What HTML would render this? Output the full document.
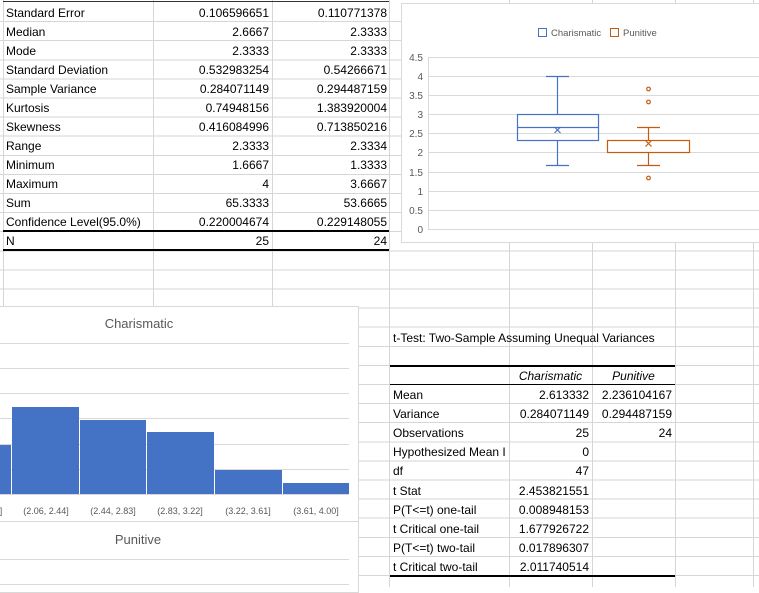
<!DOCTYPE html>
<html><head><meta charset="utf-8"><style>
html,body{margin:0;padding:0;}
body{width:759px;height:587px;position:relative;overflow:hidden;background:#fff;font-family:"Liberation Sans",Calibri,sans-serif;font-size:12px;color:#000;}
.grid{position:absolute;left:0;top:0;width:759px;height:587px;
background-image:repeating-linear-gradient(to bottom,transparent 0,transparent 18.1px,#d6d6d6 18.1px,#d6d6d6 19.1px);
background-position:0 3px;}
.v{position:absolute;top:0;width:1px;height:587px;background:#d6d6d6;}
.t{position:absolute;height:19px;line-height:19px;white-space:nowrap;}
.r{text-align:right;}
.bl{position:absolute;height:2px;background:#000;}
.chart{position:absolute;background:#fff;border:1px solid #d9d9d9;}
.sv{font-family:"Liberation Sans",sans-serif;}
</style></head><body>
<div class="grid"></div>
<div class="v" style="left:3px"></div><div class="v" style="left:153px"></div><div class="v" style="left:272px"></div><div class="v" style="left:389px"></div>
<div class="v" style="left:509px"></div><div class="v" style="left:592px"></div><div class="v" style="left:675px"></div><div class="v" style="left:753px"></div>

<div class="bl" style="left:3px;top:1px;width:386px;height:1px;background:#333"></div>
<div class="t" style="left:6px;top:4px">Standard Error</div><div class="t r" style="left:153px;width:116px;top:4px">0.106596651</div><div class="t r" style="left:272px;width:115px;top:4px">0.110771378</div>
<div class="t" style="left:6px;top:23px">Median</div><div class="t r" style="left:153px;width:116px;top:23px">2.6667</div><div class="t r" style="left:272px;width:115px;top:23px">2.3333</div>
<div class="t" style="left:6px;top:42px">Mode</div><div class="t r" style="left:153px;width:116px;top:42px">2.3333</div><div class="t r" style="left:272px;width:115px;top:42px">2.3333</div>
<div class="t" style="left:6px;top:61px">Standard Deviation</div><div class="t r" style="left:153px;width:116px;top:61px">0.532983254</div><div class="t r" style="left:272px;width:115px;top:61px">0.54266671</div>
<div class="t" style="left:6px;top:80px">Sample Variance</div><div class="t r" style="left:153px;width:116px;top:80px">0.284071149</div><div class="t r" style="left:272px;width:115px;top:80px">0.294487159</div>
<div class="t" style="left:6px;top:99px">Kurtosis</div><div class="t r" style="left:153px;width:116px;top:99px">0.74948156</div><div class="t r" style="left:272px;width:115px;top:99px">1.383920004</div>
<div class="t" style="left:6px;top:118px">Skewness</div><div class="t r" style="left:153px;width:116px;top:118px">0.416084996</div><div class="t r" style="left:272px;width:115px;top:118px">0.713850216</div>
<div class="t" style="left:6px;top:137px">Range</div><div class="t r" style="left:153px;width:116px;top:137px">2.3333</div><div class="t r" style="left:272px;width:115px;top:137px">2.3334</div>
<div class="t" style="left:6px;top:156px">Minimum</div><div class="t r" style="left:153px;width:116px;top:156px">1.6667</div><div class="t r" style="left:272px;width:115px;top:156px">1.3333</div>
<div class="t" style="left:6px;top:175px">Maximum</div><div class="t r" style="left:153px;width:116px;top:175px">4</div><div class="t r" style="left:272px;width:115px;top:175px">3.6667</div>
<div class="t" style="left:6px;top:194px">Sum</div><div class="t r" style="left:153px;width:116px;top:194px">65.3333</div><div class="t r" style="left:272px;width:115px;top:194px">53.6665</div>
<div class="t" style="left:6px;top:213px">Confidence Level(95.0%)</div><div class="t r" style="left:153px;width:116px;top:213px">0.220004674</div><div class="t r" style="left:272px;width:115px;top:213px">0.229148055</div>
<div class="t" style="left:6px;top:232px">N</div><div class="t r" style="left:153px;width:116px;top:232px">25</div><div class="t r" style="left:272px;width:115px;top:232px">24</div>
<div class="bl" style="left:3px;top:230px;width:386px"></div>
<div class="bl" style="left:3px;top:249px;width:386px"></div>

<div class="chart" style="left:401px;top:3px;width:360px;height:238px"></div>
<svg class="sv" style="position:absolute;left:0;top:0" width="759" height="250">
<g stroke="#d9d9d9" stroke-width="1">
<line x1="428" y1="57.5" x2="759" y2="57.5"/><line x1="428" y1="76.5" x2="759" y2="76.5"/><line x1="428" y1="95.5" x2="759" y2="95.5"/><line x1="428" y1="114.5" x2="759" y2="114.5"/><line x1="428" y1="133.5" x2="759" y2="133.5"/><line x1="428" y1="152.5" x2="759" y2="152.5"/><line x1="428" y1="172.5" x2="759" y2="172.5"/><line x1="428" y1="191.5" x2="759" y2="191.5"/><line x1="428" y1="210.5" x2="759" y2="210.5"/><line x1="428" y1="229.5" x2="759" y2="229.5"/>
<line x1="428.5" y1="57" x2="428.5" y2="229"/>
</g>
<g font-size="10" fill="#595959" text-anchor="end">
<text x="423" y="61">4.5</text><text x="423" y="80">4</text><text x="423" y="99">3.5</text><text x="423" y="118">3</text><text x="423" y="137">2.5</text><text x="423" y="156">2</text><text x="423" y="176">1.5</text><text x="423" y="195">1</text><text x="423" y="214">0.5</text><text x="423" y="233">0</text>
</g>
<g font-size="9.5" fill="#595959">
<rect x="538.5" y="28.5" width="8" height="8" fill="none" stroke="#4472C4"/><text x="551" y="36">Charismatic</text>
<rect x="610.5" y="28.5" width="8" height="8" fill="none" stroke="#C55A11"/><text x="623" y="36">Punitive</text>
</g>
<g stroke="#4472C4" fill="none" stroke-width="1.2">
<line x1="546" y1="76.5" x2="569" y2="76.5"/><line x1="557.5" y1="76.5" x2="557.5" y2="114.5"/>
<rect x="517.5" y="114.5" width="81" height="26"/><line x1="517.5" y1="127.5" x2="598.5" y2="127.5"/>
<line x1="557.5" y1="140.5" x2="557.5" y2="165.5"/><line x1="546" y1="165.5" x2="569" y2="165.5"/>
<path d="M554.5 127l6 6M560.5 127l-6 6"/>
</g>
<g stroke="#C55A11" fill="none" stroke-width="1.2">
<line x1="637" y1="127.5" x2="660" y2="127.5"/><line x1="648.5" y1="127.5" x2="648.5" y2="140.5"/>
<rect x="607.5" y="140.5" width="82" height="12"/>
<line x1="648.5" y1="152.5" x2="648.5" y2="165.5"/><line x1="637" y1="165.5" x2="660" y2="165.5"/>
<path d="M645.5 140.5l6 6M651.5 140.5l-6 6"/>
<circle cx="648.5" cy="89" r="1.8"/><circle cx="648.5" cy="102" r="1.8"/><circle cx="648.5" cy="178" r="1.8"/>
</g>
</svg>

<div class="chart" style="left:-2px;top:306px;width:359px;height:214px"></div>
<div class="chart" style="left:-2px;top:521px;width:359px;height:70px"></div>
<svg class="sv" style="position:absolute;left:0;top:300px" width="360" height="287">
<g stroke="#d9d9d9"><line x1="0" y1="43.5" x2="349" y2="43.5"/><line x1="0" y1="68.5" x2="349" y2="68.5"/><line x1="0" y1="93.5" x2="349" y2="93.5"/><line x1="0" y1="118.5" x2="349" y2="118.5"/><line x1="0" y1="144.5" x2="349" y2="144.5"/><line x1="0" y1="169.5" x2="349" y2="169.5"/><line x1="0" y1="194.5" x2="349" y2="194.5"/>
<line x1="0" y1="259.5" x2="349" y2="259.5"/><line x1="0" y1="284.5" x2="349" y2="284.5"/></g>
<g fill="#4472C4"><rect x="0" y="145" width="11" height="49"/><rect x="12" y="107" width="67" height="87"/><rect x="80" y="120" width="66" height="74"/><rect x="147" y="132" width="67" height="62"/><rect x="215" y="170" width="67" height="24"/><rect x="283" y="183" width="66" height="11"/></g>
<text x="139" y="28" font-size="13" fill="#595959" text-anchor="middle">Charismatic</text>
<text x="138" y="244" font-size="13" fill="#595959" text-anchor="middle">Punitive</text>
<g font-size="9" fill="#595959" text-anchor="middle"><text x="1" y="214">]</text><text x="46" y="214">(2.06, 2.44]</text><text x="113" y="214">(2.44, 2.83]</text><text x="180" y="214">(2.83, 3.22]</text><text x="248" y="214">(3.22, 3.61]</text><text x="316" y="214">(3.61, 4.00]</text></g>
</svg>

<div class="t" style="left:393px;top:329px">t-Test: Two-Sample Assuming Unequal Variances</div>
<div class="t" style="left:509px;width:83px;top:367px;text-align:center;font-style:italic">Charismatic</div>
<div class="t" style="left:592px;width:83px;top:367px;text-align:center;font-style:italic">Punitive</div>
<div class="bl" style="left:390px;top:365px;width:285px"></div>
<div class="bl" style="left:390px;top:384px;width:285px;height:1px"></div>
<div class="bl" style="left:390px;top:575px;width:285px"></div>
<div class="t" style="left:393px;top:386px">Mean</div><div class="t r" style="left:509px;width:80px;top:386px">2.613332</div><div class="t r" style="left:592px;width:80px;top:386px">2.236104167</div>
<div class="t" style="left:393px;top:405px">Variance</div><div class="t r" style="left:509px;width:80px;top:405px">0.284071149</div><div class="t r" style="left:592px;width:80px;top:405px">0.294487159</div>
<div class="t" style="left:393px;top:424px">Observations</div><div class="t r" style="left:509px;width:80px;top:424px">25</div><div class="t r" style="left:592px;width:80px;top:424px">24</div>
<div class="t" style="left:393px;top:443px;width:115px;overflow:hidden">Hypothesized Mean I</div><div class="t r" style="left:509px;width:80px;top:443px">0</div>
<div class="t" style="left:393px;top:462px">df</div><div class="t r" style="left:509px;width:80px;top:462px">47</div>
<div class="t" style="left:393px;top:482px">t Stat</div><div class="t r" style="left:509px;width:80px;top:482px">2.453821551</div>
<div class="t" style="left:393px;top:501px">P(T&lt;=t) one-tail</div><div class="t r" style="left:509px;width:80px;top:501px">0.008948153</div>
<div class="t" style="left:393px;top:520px">t Critical one-tail</div><div class="t r" style="left:509px;width:80px;top:520px">1.677926722</div>
<div class="t" style="left:393px;top:539px">P(T&lt;=t) two-tail</div><div class="t r" style="left:509px;width:80px;top:539px">0.017896307</div>
<div class="t" style="left:393px;top:558px">t Critical two-tail</div><div class="t r" style="left:509px;width:80px;top:558px">2.011740514</div>
</body></html>
